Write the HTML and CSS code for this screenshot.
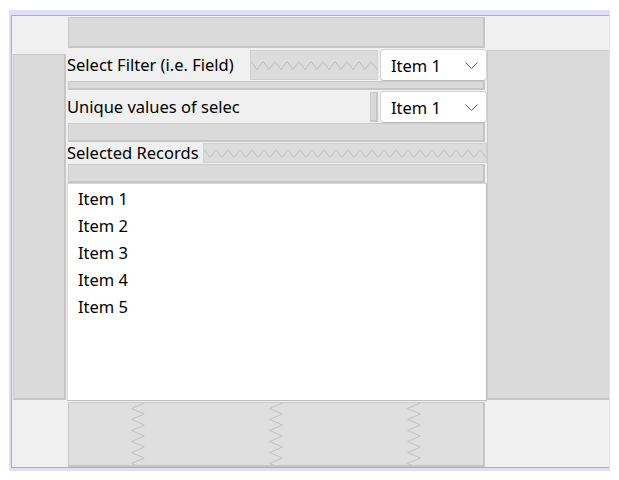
FILE: index.html
```html
<!DOCTYPE html>
<html>
<head>
    <title>Filter Form</title>
    <link rel="stylesheet" href="styles.css">
</head>
<body>
    <div class="window">
        <div class="canvas">
            <div class="cell"></div>
            <div class="cell">
                <div class="panel top-bar"></div>
            </div>
            <div class="cell"></div>

            <div class="cell">
                <div class="panel side-left"></div>
            </div>
            <div class="cell form">
                <div class="row row-field">
                    <label class="label label-field">Select Filter (i.e. Field)</label>
                    <div class="spacer spacer-field">
                        <svg width="100%" height="100%">
                            <defs>
                                <pattern id="zigH" x="0" y="0" width="12" height="9" patternUnits="userSpaceOnUse">
                                    <polyline points="0,0.5 6,8.5 12,0.5" fill="none" stroke="#bdbdbd" stroke-width="1"/>
                                </pattern>
                                <pattern id="zigV" x="0" y="0" width="14" height="11" patternUnits="userSpaceOnUse">
                                    <polyline points="13.5,0 0.5,5.5 13.5,11" fill="none" stroke="#c0c0c0" stroke-width="1"/>
                                </pattern>
                            </defs>
                            <g transform="translate(0,10)">
                                <rect width="100%" height="9" fill="url(#zigH)"/>
                            </g>
                        </svg>
                    </div>
                    <div class="combo">
                        <span>Item 1</span>
                        <svg class="chevron" width="13" height="7">
                            <polyline points="0.5,0.5 6.5,6.5 12.5,0.5" fill="none" stroke="#606060" stroke-width="1"/>
                        </svg>
                    </div>
                </div>
                <div class="panel bar bar-thin"></div>
                <div class="row row-values">
                    <label class="label label-values">Unique values of selec</label>
                    <div class="panel grip"></div>
                    <div class="combo">
                        <span>Item 1</span>
                        <svg class="chevron" width="13" height="7">
                            <polyline points="0.5,0.5 6.5,6.5 12.5,0.5" fill="none" stroke="#606060" stroke-width="1"/>
                        </svg>
                    </div>
                </div>
                <div class="panel bar"></div>
                <div class="row row-records">
                    <label class="label label-records">Selected Records</label>
                    <div class="spacer spacer-records">
                        <svg width="100%" height="100%">
                            <g transform="translate(0,5)">
                                <rect width="100%" height="9" fill="url(#zigH)"/>
                            </g>
                        </svg>
                    </div>
                </div>
                <div class="panel bar"></div>
                <ul class="list">
                    <li>Item 1</li>
                    <li>Item 2</li>
                    <li>Item 3</li>
                    <li>Item 4</li>
                    <li>Item 5</li>
                </ul>
            </div>
            <div class="cell">
                <div class="panel side-right"></div>
            </div>

            <div class="cell"></div>
            <div class="cell">
                <div class="panel footer">
                    <div class="vspacer">
                        <svg width="14" height="62"><rect width="14" height="62" fill="url(#zigV)"/></svg>
                    </div>
                    <div class="vspacer">
                        <svg width="14" height="62"><rect width="14" height="62" fill="url(#zigV)"/></svg>
                    </div>
                    <div class="vspacer">
                        <svg width="14" height="62"><rect width="14" height="62" fill="url(#zigV)"/></svg>
                    </div>
                </div>
            </div>
            <div class="cell"></div>
        </div>
    </div>
</body>
</html>
```

FILE: styles.css
```css
body {
    margin: 0;
    padding: 0;
    background-color: #fff;
    font-family: "Noto Sans", "Open Sans", sans-serif;
    font-size: 16.5px;
    color: #000;
}

.window {
    margin: 10px 0 0 9px;
    width: 601px;
    height: 461px;
    box-sizing: border-box;
    border-style: solid;
    border-color: #dfdff7;
    border-width: 5px 1px 3px 2px;
}

.canvas {
    height: 100%;
    box-sizing: border-box;
    background-color: #f0f0f0;
    border-style: solid;
    border-color: #f0a43a;
    border-width: 1px 0 1px 1px;
    display: grid;
    grid-template-columns: 55px 420px 1fr;
    grid-template-rows: 34px 351px 1fr;
}

.cell {
    min-width: 0;
}

.panel {
    box-sizing: border-box;
    background-color: #dadada;
    border: 1px solid #cacaca;
    border-right: 2px solid #c6c6c6;
    border-bottom: 2px solid #c6c6c6;
}

.top-bar {
    margin: 1px 0 0 1px;
    width: 417px;
    height: 31px;
}

.side-left {
    margin: 4px 0 0 1px;
    width: 53px;
    height: 346px;
}

.side-right {
    width: 100%;
    height: 350px;
    border-right: none;
}

.footer {
    margin: 1px 0 0 1px;
    width: 417px;
    height: 65px;
    background-color: #dfdfdf;
    display: grid;
    grid-template-columns: repeat(3, 1fr);
    justify-items: center;
    align-items: start;
}

.vspacer {
    height: 62px;
}

.vspacer svg {
    display: block;
}

/* middle column with the filter controls */
.form {
    display: flex;
    flex-direction: column;
    margin-top: -1px;
}

.row {
    display: flex;
    align-items: center;
    height: 32px;
    flex: none;
}

.label {
    flex: none;
    white-space: nowrap;
    line-height: 22px;
}

.label-field {
    width: 183px;
}

.label-values {
    width: 303px;
}

.label-records {
    width: 136px;
}

.spacer {
    box-sizing: border-box;
    background-color: #dcdcdc;
    border: 1px solid #d0d0d0;
    flex: none;
}

.spacer svg {
    display: block;
}

.spacer-field {
    width: 128px;
    height: 30px;
    align-self: flex-start;
    margin-top: 1px;
}

.row-records {
    height: 20px;
    margin-top: 1px;
}

.spacer-records {
    width: 284px;
    height: 20px;
}

.grip {
    flex: none;
    width: 8px;
    height: 30px;
    align-self: flex-start;
    margin-top: 1px;
}

.combo {
    flex: none;
    box-sizing: border-box;
    width: 107px;
    height: 32px;
    margin-left: 2px;
    padding: 0 8px 0 10px;
    background-color: #fff;
    border: 1px solid #d4d4d4;
    border-bottom-color: #bcbcbc;
    border-radius: 4px;
    display: flex;
    align-items: center;
}

.chevron {
    margin-left: auto;
    display: block;
}

.bar {
    flex: none;
    margin-left: 1px;
    width: 417px;
    height: 19px;
}

.bar-thin {
    height: 9px;
}

.row-values {
    margin-top: 1px;
}

.row-records + .bar {
    margin-top: 1px;
}

.list {
    flex: none;
    list-style: none;
    margin: 0;
    padding: 1px 0 0 10px;
    height: 218px;
    box-sizing: border-box;
    background-color: #fff;
    border: 1px solid #d6d6d6;
    border-right-color: #bfbfbf;
    border-bottom-color: #bfbfbf;
}

.list li {
    line-height: 27px;
}
```
